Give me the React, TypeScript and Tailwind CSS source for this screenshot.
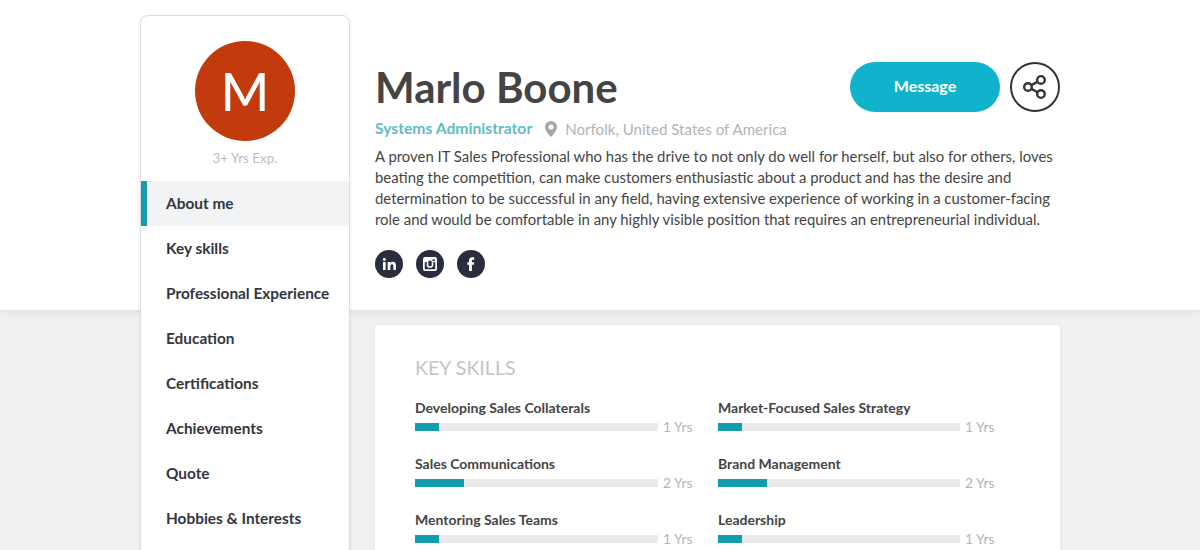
import React from "react";

const nav = ["About me", "Key skills", "Professional Experience", "Education", "Certifications", "Achievements", "Quote", "Hobbies & Interests"];
const skills = [
  ["Developing Sales Collaterals", 1, "Market-Focused Sales Strategy", 1],
  ["Sales Communications", 2, "Brand Management", 2],
  ["Mentoring Sales Teams", 1, "Leadership", 1],
] as const;

function Skill({ name, yrs, last }: { name: string; yrs: number; last?: boolean }) {
  return (
    <div className="h-[56px]">
      <div className="text-[14px] leading-[20px] font-bold text-[#444]">{name}</div>
      <div className="mt-[1px] flex items-center">
        <div className={`h-[8px] bg-[#e9eaec] ${last ? "w-[242px]" : "w-[243px]"}`}>
          <div className="h-full bg-[#129cad]" style={{ width: yrs === 1 ? 24 : 49 }} />
        </div>
        <span className="ml-[5px] text-[13.8px] leading-[16px] text-[#b5b5b5]">{yrs} Yrs</span>
      </div>
    </div>
  );
}

function Social({ children }: { children: React.ReactNode }) {
  return (
    <div className="w-[28px] h-[28px] rounded-full bg-[#2a2d3e] flex items-center justify-center">{children}</div>
  );
}

export default function App() {
  return (
    <div className="relative h-[550px] overflow-hidden bg-[#f1f1f1] font-['Lato',sans-serif]">
      <div className="absolute inset-x-0 top-0 h-[310px] bg-white shadow-[0_2px_8px_rgba(0,0,0,0.08)]" />
      <div className="relative mx-auto w-[920px] flex items-start pt-[15px]">
        <aside className="w-[210px] h-[600px] shrink-0 bg-white border border-[#dcdde0] rounded-[8px] shadow-[0_1px_4px_rgba(0,0,0,0.08)] overflow-hidden">
          <div className="pt-[25px] flex flex-col items-center">
            <div className="w-[100px] h-[100px] rounded-full bg-[#c33a0c] flex items-center justify-center text-white text-[52px] leading-none font-medium">M</div>
            <div className="mt-[9px] text-[13.4px] leading-[17px] text-[#bdbdc2]">3+ Yrs Exp.</div>
          </div>
          <nav className="mt-[14px]">
            {nav.map((n, i) => (
              <div key={n} className={`h-[45px] flex items-center text-[15.4px] font-bold text-[#333640] ${i === 0 ? "bg-[#f2f3f5] border-l-[6px] border-[#129cad] pl-[19px]" : "pl-[25px]"}`}>
                {n}
              </div>
            ))}
          </nav>
        </aside>
        <main className="ml-[25px] w-[685px]">
          <div className="h-[295px]">
            <div className="flex items-start justify-between pt-[47px]">
              <h1 className="text-[42px] leading-[50px] font-bold text-[#444]">Marlo Boone</h1>
              <div className="flex items-center gap-[10px]">
                <div className="w-[150px] h-[50px] rounded-full bg-[#10b3cb] flex items-center justify-center text-white text-[16px] font-bold pb-[3px]">Message</div>
                <div className="w-[50px] h-[50px] rounded-full border-2 border-[#333] flex items-center justify-center">
                  <svg width="26" height="26" viewBox="0 0 24 24" fill="none" stroke="#333" strokeWidth="2.200">
                    <circle cx="17.5" cy="5.5" r="3.500" />
                    <circle cx="5.5" cy="12" r="3.500" />
                    <circle cx="17.5" cy="18.5" r="3.500" />
                    <path d="M8.6 10.3 14.4 7.2M8.6 13.7l5.8 3.1" />
                  </svg>
                </div>
              </div>
            </div>
            <div className="mt-[5px] flex items-center h-[24px]">
              <span className="text-[15.7px] font-bold text-[#5fbcc6]">Systems Administrator</span>
              <svg className="ml-[13px]" width="12" height="16" viewBox="0 0 12 16">
                <path fillRule="evenodd" fill="#a3a6ad" d="M6 0a6 6 0 0 1 6 6c0 3-3.500 7.500-6 10C3.500 13.500 0 9 0 6a6 6 0 0 1 6-6zm0 3.500a2.500 2.500 0 1 0 0 5 2.500 2.500 0 0 0 0-5z" />
              </svg>
              <span className="ml-[8px] text-[15.1px] text-[#b3b3b8]">Norfolk, United States of America</span>
            </div>
            <p className="mt-[5px] text-[14.9px] leading-[21px] text-[#444]">
              A proven IT Sales Professional who has the drive to not only do well for herself, but also for others, loves beating the competition, can make customers enthusiastic about a product and has the desire and determination to be successful in any field, having extensive experience of working in a customer-facing role and would be comfortable in any highly visible position that requires an entrepreneurial individual.
            </p>
            <div className="mt-[20px] flex gap-[13px]">
              <Social>
                <svg width="16" height="16" viewBox="0 0 24 24" fill="#fff"><path d="M3 9h4v12H3zM5 3a2.200 2.200 0 1 1 0 4.400A2.200 2.200 0 0 1 5 3zM10 9h3.800v1.700c.6-1 1.900-2 3.900-2 4 0 4.800 2.600 4.800 6V21h-4v-5.500c0-1.400 0-3.100-1.900-3.100s-2.600 1.500-2.600 3V21h-4z" /></svg>
              </Social>
              <Social>
                <svg width="14" height="14" viewBox="0 0 16 16" fill="none"><rect x="1" y="1" width="14" height="14" rx="1.500" stroke="#fff" strokeWidth="2" /><circle cx="8" cy="8.500" r="3" stroke="#fff" strokeWidth="1.800" /><rect x="1" y="1" width="14" height="5" fill="#fff" /><circle cx="8" cy="6" r="2" fill="#2a2d3e" /><rect x="11" y="2.500" width="2.500" height="2" fill="#2a2d3e" /></svg>
              </Social>
              <Social>
                <svg width="16" height="16" viewBox="0 0 16 16" fill="#fff"><path d="M6 15V8.800H4.300V6.300H6V4.700C6 2.600 7.100 1.300 9.200 1.300h2v2.500H10c-.8 0-1.100.4-1.100 1.100v1.400h2.300l-.3 2.500h-2V15z" /></svg>
              </Social>
            </div>
          </div>
          <section className="mt-[15px] h-[300px] bg-white rounded-[4px] px-[40px] pt-[30px] shadow-[0_1px_6px_rgba(0,0,0,0.05)]">
            <h2 className="text-[19.6px] leading-[26px] text-[#c4c4c4]">KEY SKILLS</h2>
            <div className="mt-[17px] grid grid-cols-[303px_1fr]">
              {skills.map((s) => (
                <React.Fragment key={s[0]}>
                  <Skill name={s[0]} yrs={s[1]} />
                  <Skill name={s[2]} yrs={s[3]} last />
                </React.Fragment>
              ))}
            </div>
          </section>
        </main>
      </div>
    </div>
  );
}
